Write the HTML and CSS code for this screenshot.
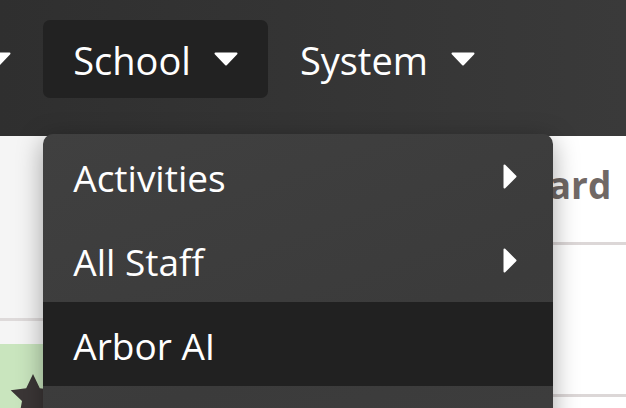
FILE: index.html
```html
<!DOCTYPE html>
<html>
	<head>
		<meta charset="utf-8">
		<title>Arbor</title>
		<link rel="stylesheet" href="styles.css">
	</head>
	<body>
		<!-- top navigation -->
		<div class="topbar">
			<ul class="nav">
				<li class="nav-item first">
					<span class="nav-label">Students</span>
					<svg class="caret" width="24" height="14" viewBox="0 0 24 14"><path d="M1.5 1.5h21L12 12.5z"/></svg>
				</li>
				<li class="nav-item open">
					<span class="nav-label">School</span>
					<svg class="caret" width="24" height="14" viewBox="0 0 24 14"><path d="M1.5 1.5h21L12 12.5z"/></svg>
					<!-- dropdown -->
					<ul class="menu">
						<li class="menu-item">
							<span>Activities</span>
							<svg class="arrow" width="14" height="25" viewBox="0 0 14 25"><path d="M1.5 1.5v22l11-11z"/></svg>
						</li>
						<li class="menu-item">
							<span>All Staff</span>
							<svg class="arrow" width="14" height="25" viewBox="0 0 14 25"><path d="M1.5 1.5v22l11-11z"/></svg>
						</li>
						<li class="menu-item active"><span>Arbor AI</span></li>
						<li class="menu-item"><span>Calendar</span></li>
					</ul>
				</li>
				<li class="nav-item">
					<span class="nav-label">System</span>
					<svg class="caret" width="24" height="14" viewBox="0 0 24 14"><path d="M1.5 1.5h21L12 12.5z"/></svg>
				</li>
			</ul>
		</div>

		<!-- page body -->
		<div class="page">
			<div class="sidebar">
				<div class="side-block"></div>
				<div class="side-gap"></div>
				<div class="side-fav">
					<svg class="star" width="48" height="46" viewBox="0 0 48 46"><path d="M24 1l6.8 14.2 15.5 2.1-11.3 10.8 2.8 15.4L24 36 10.2 43.5 13 28.1 1.7 17.3l15.5-2.1z"/></svg>
				</div>
			</div>
			<div class="main">
				<div class="main-header">
					<h1 class="title">Dashboard</h1>
				</div>
				<div class="main-block"></div>
			</div>
		</div>
	</body>
</html>
```

FILE: styles.css
```css
* {
	margin: 0;
	padding: 0;
	list-style: none;
	box-sizing: border-box;
}

body {
	font-family: "Open Sans", "Noto Sans", sans-serif;
	background-color: #fff;
	overflow: hidden;
}

/* top navigation */
.topbar {
	height: 136px;
	padding-top: 20px;
	background: linear-gradient(to right, #2f2f2f, #3a3a3a);
}

.nav {
	display: flex;
	gap: 2px;
}

.nav-item {
	position: relative;
	display: flex;
	align-items: center;
	gap: 23px;
	height: 78px;
	padding: 0 30px 0 30px;
	color: #fff;
	font-size: 38px;
	border-radius: 7px;
}

.nav-item.first {
	margin-left: -223px;
}

.nav-item.open {
	background-color: #222;
}

.nav-label {
	line-height: 1;
	padding-top: 2px;
}

.caret path,
.arrow path {
	fill: #fff;
	stroke: #fff;
	stroke-width: 2;
	stroke-linejoin: round;
}

/* dropdown */
.menu {
	position: absolute;
	left: 0;
	top: calc(100% + 36px);
	width: 510px;
	border-radius: 10px 10px 0 0;
	background: linear-gradient(160deg, #404040, #3b3b3b 60%, #3e3e3e);
	box-shadow: 0 6px 26px rgba(0, 0, 0, 0.35);
	overflow: hidden;
	z-index: 10;
}

.menu-item {
	display: flex;
	align-items: center;
	justify-content: space-between;
	height: 84px;
	padding: 0 36px 0 30px;
	color: #fff;
	font-size: 37px;
}

.menu-item span {
	padding-top: 2px;
}

.menu-item.active {
	background-color: #212121;
}

/* page body */
.page {
	display: flex;
}

.sidebar {
	width: 300px;
	flex-shrink: 0;
	background-color: #f5f5f5;
}

.side-block {
	height: 185px;
	border-bottom: 3px solid #dedada;
}

.side-gap {
	height: 23px;
}

.side-fav {
	height: 120px;
	padding: 29px 0 0 9px;
	background-color: #c9e5be;
}

.star path {
	fill: #3b3636;
}

.main {
	flex: 1;
}

.main-header {
	height: 109px;
	padding: 30px 0 0 110px;
	border-bottom: 3px solid #dcd7d7;
}

.title {
	font-size: 37px;
	font-weight: 700;
	color: #706865;
	line-height: 1;
}

.main-block {
	height: 152px;
	border-bottom: 3px solid #dcd7d7;
}
```
